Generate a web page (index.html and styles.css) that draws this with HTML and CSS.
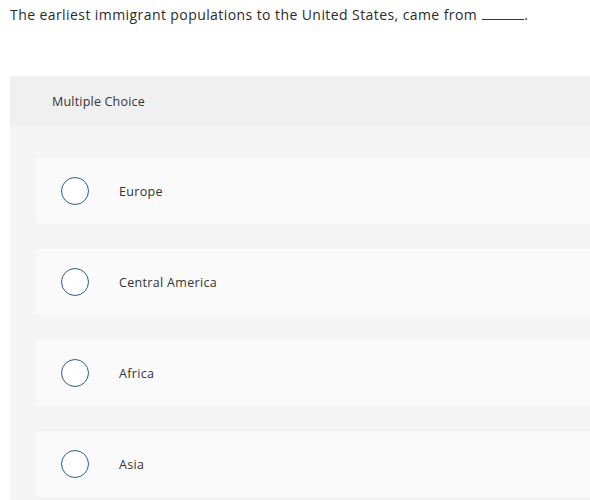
FILE: index.html
```html
<!DOCTYPE html>
<html>
<head>
<meta charset="utf-8">
<link rel="stylesheet" href="styles.css">
</head>
<body>
<div class="question">The earliest immigrant populations to the United States, came from <span class="blank"></span>.</div>
<div class="panel">
  <div class="panel-header">Multiple Choice</div>
  <div class="options">
    <div class="option"><span class="radio"></span><span class="label">Europe</span></div>
    <div class="option"><span class="radio"></span><span class="label">Central America</span></div>
    <div class="option"><span class="radio"></span><span class="label">Africa</span></div>
    <div class="option"><span class="radio"></span><span class="label">Asia</span></div>
  </div>
</div>
</body>
</html>
```
FILE: styles.css
```css
html, body {
  margin: 0;
  padding: 0;
  background: #ffffff;
  font-family: "Open Sans", "Liberation Sans", sans-serif;
  color: #333333;
}
.question {
  padding: 6px 10px 0 10px;
  height: 70px;
  box-sizing: border-box;
  font-size: 14px;
  line-height: 18px;
  letter-spacing: 0.42px;
  color: #2b2b2b;
}
.blank {
  display: inline-block;
  width: 42px;
  border-bottom: 1px solid #333;
  vertical-align: baseline;
  margin-left: 1px;
}
.panel {
  margin: 6px 0 0 10px;
  background: #f5f5f5;
  height: 424px;
}
.panel-header {
  height: 50px;
  background: #f0f0f0;
  padding-left: 42px;
  display: flex;
  align-items: center;
  font-size: 12.5px;
  letter-spacing: 0.2px;
  color: #333;
}
.options {
  padding: 32px 0 0 26px;
  display: flex;
  flex-direction: column;
  gap: 25px;
}
.option {
  height: 66px;
  background: #fafafa;
  border-radius: 3px 0 0 3px;
  display: flex;
  align-items: center;
  padding-left: 25px;
}
.radio {
  width: 28px;
  height: 28px;
  box-sizing: border-box;
  border: 1.5px solid #2f5d8c;
  border-radius: 50%;
  background: #ffffff;
  flex: none;
}
.label {
  margin-left: 30px;
  font-size: 12.5px;
  letter-spacing: 0.33px;
  color: #333;
}
```
